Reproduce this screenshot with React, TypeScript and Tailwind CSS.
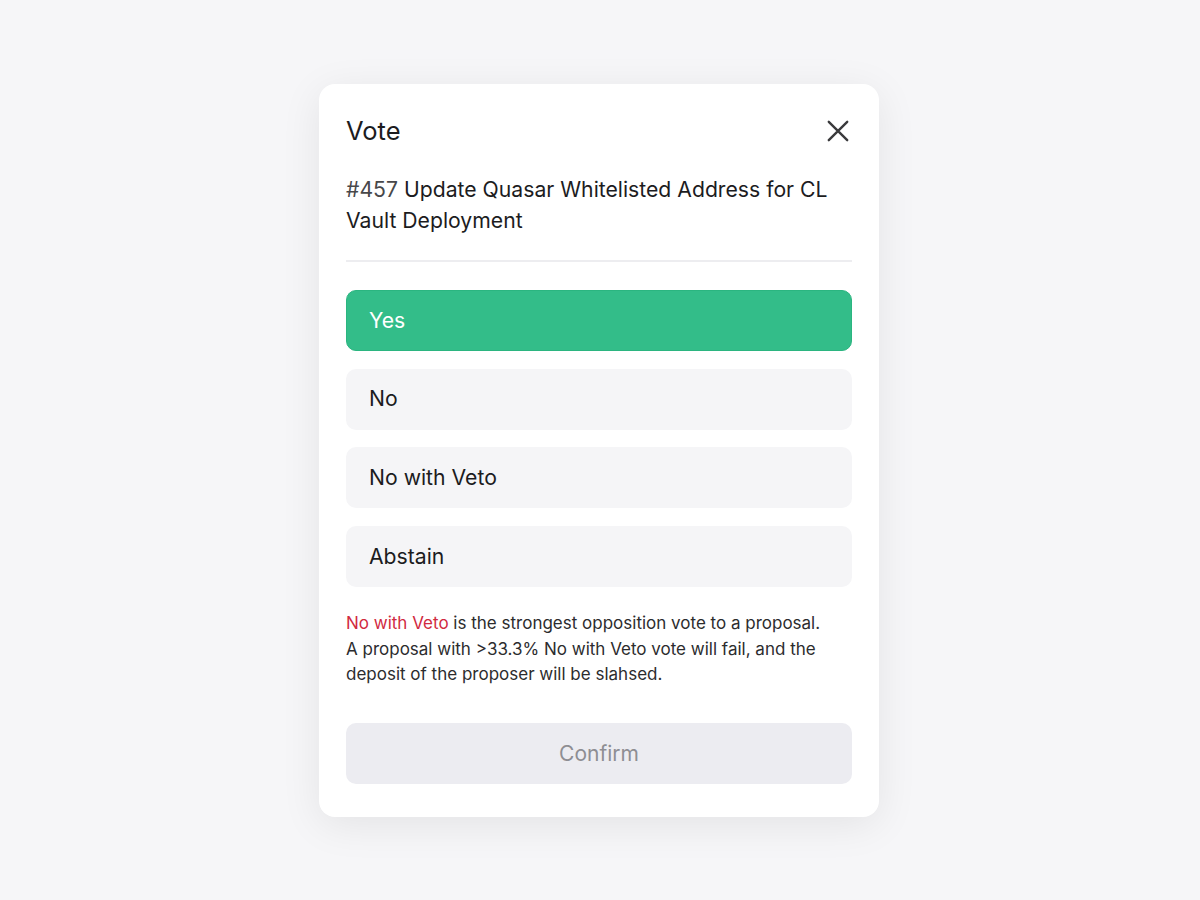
import React from "react";

export default function App() {
  const options = ["Yes", "No", "No with Veto", "Abstain"];
  return (
    <div
      className="w-full min-h-[900px] bg-[#f6f6f8] flex justify-center"
      style={{ fontFamily: "Inter, 'Noto Sans', sans-serif" }}
    >
      <div className="mt-[84px] mr-[2px] w-[560px] h-[733px] bg-white rounded-[16px] shadow-[0_8px_40px_rgba(0,0,0,0.08)] px-[27px] pt-[27px] pb-[33px] flex flex-col">
        <div className="flex items-center justify-between h-[40px]">
          <div className="text-[25.5px] text-[#1c1c1e] leading-[40px]">Vote</div>
          <svg width="26" height="26" viewBox="0 0 24 24" className="mr-[1px]">
            <path d="M3.5 3.5 L20.5 20.5 M20.5 3.5 L3.5 20.5" stroke="#3a3a3c" strokeWidth="2.2" strokeLinecap="round" />
          </svg>
        </div>
        <div className="mt-[23px] text-[21.2px] leading-[31px] text-[#1c1c1e]">
          <span className="text-[#48484a]">#457</span>
          {" Update Quasar Whitelisted Address for CL Vault Deployment"}
        </div>
        <div className="mt-[24px] h-[2px] bg-[#ededf0]" />
        <div className="mt-[28px] flex flex-col gap-[17.7px]">
          {options.map((o, i) => (
            <div
              key={o}
              className={
                i === 0
                  ? "h-[61px] rounded-[10px] bg-[#33bd89] border border-[#2bb580] px-[22px] flex items-center text-[21.2px] text-white"
                  : "h-[61px] rounded-[10px] bg-[#f5f5f7] px-[23px] flex items-center text-[21.2px] text-[#1c1c1e]"
              }
            >
              {o}
            </div>
          ))}
        </div>
        <div className="mt-[24px] text-[17px] leading-[25.5px] text-[#2c2c2e]">
          <span className="text-[#d12a3f]">No with Veto</span> is the strongest opposition vote to a proposal.
          <br />
          A proposal with &gt;33.3% No with Veto vote will fail, and the
          <br />
          deposit of the proposer will be slahsed.
        </div>
        <div className="mt-auto h-[61px] rounded-[10px] bg-[#ececf1] flex items-center justify-center text-[21px] text-[#8e8e93]">
          Confirm
        </div>
      </div>
    </div>
  );
}
